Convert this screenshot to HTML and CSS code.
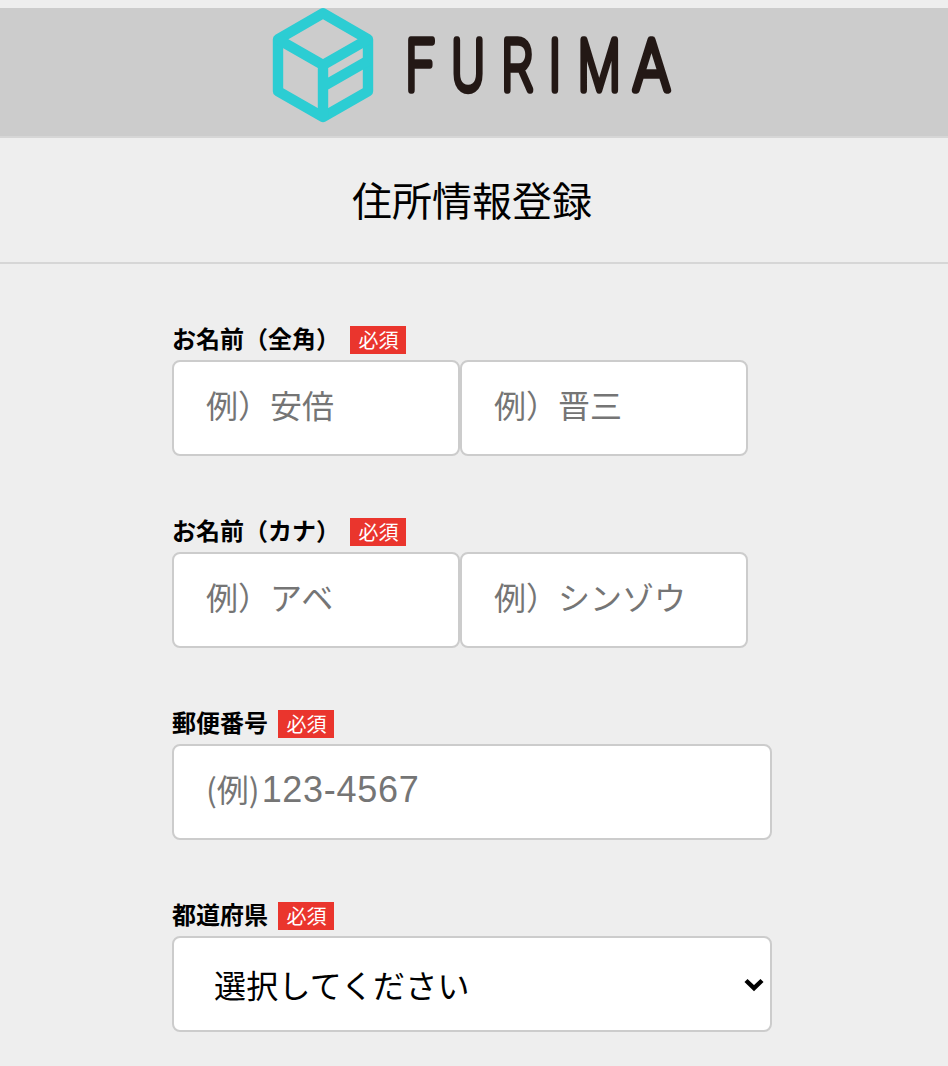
FILE: index.html
```
<!doctype html>
<html lang="ja">

<head>
  <meta charset="utf-8">
  <title>FURIMA</title>
  <link rel="stylesheet" href="styles.css">
</head>

<body>
  <header class="header">
    <svg class="logo" width="400" height="116" viewBox="0 0 400 116" role="img" aria-label="FURIMA">
      <g class="logo-mark">
        <path d="M51 5.3L96 31.2V83.2L51 109L6 83.2V31.2Z" />
        <path d="M6 31.2L51 57L96 31.2M51 57V109M51 78.5L96 52.7" />
      </g>
      <text class="logo-text" transform="translate(0 82) scale(.7 1)" x="191.5 256.7 328.6 395 437.4">FURIM<tspan x="517" textLength="50" lengthAdjust="spacingAndGlyphs">A</tspan></text>
    </svg>
  </header>
  <h1 class="title">住所情報登録</h1>
  <form class="address-form">
    <div class="form-group">
      <div class="form-text">
        <label for="last-name">お名前（全角）</label>
        <span class="required">必須</span>
      </div>
      <div class="input-wrap">
        <input class="input-name" id="last-name" type="text" placeholder="例）安倍">
        <input class="input-name" id="first-name" type="text" placeholder="例）晋三">
      </div>
    </div>
    <div class="form-group">
      <div class="form-text">
        <label for="last-name-kana">お名前（カナ）</label>
        <span class="required">必須</span>
      </div>
      <div class="input-wrap">
        <input class="input-name" id="last-name-kana" type="text" placeholder="例）アベ">
        <input class="input-name" id="first-name-kana" type="text" placeholder="例）シンゾウ">
      </div>
    </div>
    <div class="form-group">
      <div class="form-text">
        <label>郵便番号</label>
        <span class="required">必須</span>
      </div>
      <div class="input-default postal" contenteditable="true"><span>(例)</span><span class="digits">123-4567</span></div>
    </div>
    <div class="form-group">
      <div class="form-text">
        <label for="prefecture">都道府県</label>
        <span class="required">必須</span>
      </div>
      <div class="select-wrap">
        <select class="input-default select-box" id="prefecture">
          <option>選択してください</option>
        </select>
        <svg class="arrow" width="20" height="14" viewBox="0 0 20 14">
          <path d="M2 2.5L10 10.2L18 2.5" />
        </svg>
      </div>
    </div>
  </form>
</body>

</html>
```
FILE: styles.css
```
* {
  box-sizing: border-box;
}

body {
  margin: 8px 0 0;
  background-color: #eee;
  color: #000;
  font-family: "Noto Sans CJK JP", sans-serif;
  overflow: hidden;
}

.header {
  display: flex;
  justify-content: center;
  height: 130px;
  background-color: #ccc;
  border-bottom: 2px solid #d6d6d6;
}

.logo {
  display: block;
  margin-right: 4px;
}

.logo-mark {
  fill: none;
  stroke: #2ccdd3;
  stroke-width: 10.4;
  stroke-linejoin: round;
}

.logo-text {
  font-family: Roboto, sans-serif;
  font-size: 70px;
  font-weight: 100;
  fill: #231815;
  stroke: #231815;
  stroke-width: 7.6px;
  stroke-linejoin: round;
}

.title {
  display: flex;
  align-items: center;
  justify-content: center;
  height: 126px;
  margin: 0;
  padding: 0 4px 3px 0;
  border-bottom: 2px solid #d6d6d6;
  font-size: 40px;
  font-weight: 400;
}

.address-form {
  display: flex;
  flex-direction: column;
  gap: 62px;
  width: 600px;
  margin: 62px 0 0 172px;
}

.form-text {
  display: flex;
  gap: 10px;
  height: 28px;
  margin-bottom: 6px;
  font-size: 24px;
  font-weight: 700;
  line-height: 24px;
}

.required {
  width: 56px;
  height: 28px;
  padding-left: 1px;
  background-color: #ea352d;
  color: #fff;
  font-size: 20px;
  font-weight: 400;
  line-height: 28px;
  text-align: center;
}

.input-wrap {
  display: flex;
}

.input-name,
.input-default {
  height: 96px;
  padding: 0 32px 9px;
  border: 2px solid #ccc;
  border-radius: 8px;
  background-color: #fff;
  font-family: inherit;
  font-size: 32px;
}

.input-name {
  width: 288px;
}

.input-default {
  width: 100%;
}

::placeholder {
  color: #757575;
}

.postal {
  color: #757575;
  line-height: 84px;
}

.digits {
  margin-left: 2px;
  font-family: "Liberation Sans", sans-serif;
  font-size: 36px;
  letter-spacing: .7px;
}

.select-wrap {
  position: relative;
}

.select-box {
  display: block;
  padding: 0 40px 0 40px;
  appearance: none;
  color: #000;
  letter-spacing: .2px;
}

.arrow {
  position: absolute;
  top: 42px;
  right: 8px;
  fill: none;
  stroke: #000;
  stroke-width: 4.4;
}
```
